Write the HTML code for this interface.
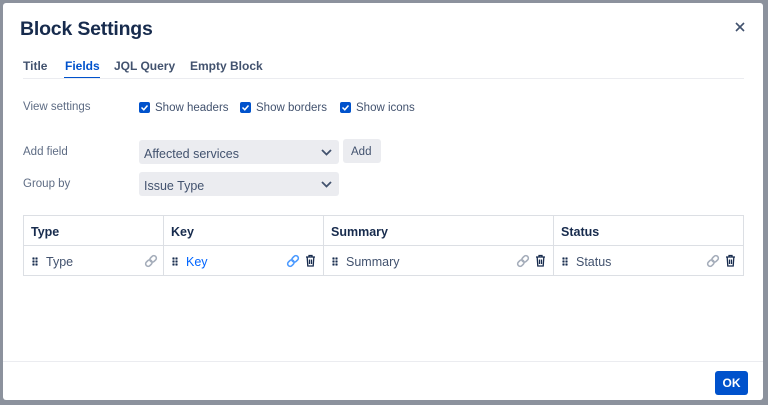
<!DOCTYPE html>
<html><head><style>
*{box-sizing:border-box;margin:0;padding:0}
body{width:768px;height:405px;background:#8c929d;font-family:"Liberation Sans",sans-serif;position:relative;overflow:hidden;color:#172b4d}
.m{position:absolute;left:3px;top:3px;width:760px;height:397px;background:#fff;border-radius:3px}
.a{position:absolute;white-space:nowrap}
.t{font-size:19.5px;color:#172b4d;left:17px;top:15px;font-weight:bold;letter-spacing:-0.2px;-webkit-text-stroke:0}
.tab{font-size:12px;font-weight:bold;color:#42526e;top:56px}
.lbl{font-size:11.5px;color:#5e6c84}
.cb{position:absolute;width:11px;height:11px;background:#0052cc;border-radius:2px}
.cb svg{position:absolute;left:1px;top:1px}
.cbl{font-size:11.5px;color:#42526e}
.sel{position:absolute;background:#ebecf0;border-radius:3px;font-size:12.5px;color:#42526e;padding:7px 0 0 5px}
.chev{position:absolute;right:7px;top:9px}
.tbl{position:absolute;left:20px;top:212px;width:721px;height:61px;border:1px solid #dcdfe4}
.hd{position:absolute;top:0;height:30px;font-size:12.5px;font-weight:bold;color:#172b4d;padding:9px 0 0 7px;border-right:1px solid #dcdfe4;border-bottom:1px solid #dcdfe4}
.cl{position:absolute;top:30px;height:29px;font-size:12.5px;color:#42526e;padding:9px 0 0 22px;border-right:1px solid #dcdfe4}
.grip{position:absolute;left:8px;top:11px;width:6px;height:9px;background:radial-gradient(circle,#172b4d 1.1px,transparent 1.3px) 0 0/3px 3px}
.ic{position:absolute;top:8px}
</style></head><body>
<div class="m">
<div class="a t" style="font-weight:600">Block Settings</div>
<svg class="a" style="left:732px;top:19px" width="10" height="10"><path d="M1 1L9 9M9 1L1 9" stroke="#42526e" stroke-width="1.6"/></svg>
<div class="a tab" style="left:20px">Title</div>
<div class="a tab" style="left:62px;color:#0052cc">Fields</div>
<div class="a" style="left:61px;top:74px;width:36px;height:2px;background:#0052cc"></div>
<div class="a tab" style="left:111px">JQL Query</div>
<div class="a tab" style="left:187px">Empty Block</div>
<div class="a" style="left:20px;top:75px;width:721px;height:1px;background:#ebecf0"></div>

<div class="a lbl" style="left:20px;top:98px">View settings</div>
<div class="cb" style="left:136px;top:99px"><svg width="9" height="9"><path d="M1.5 4.5L3.8 6.8L7.5 2.5" stroke="#fff" stroke-width="1.5" fill="none"/></svg></div>
<div class="a cbl" style="left:152px;top:99px">Show headers</div>
<div class="cb" style="left:237px;top:99px"><svg width="9" height="9"><path d="M1.5 4.5L3.8 6.8L7.5 2.5" stroke="#fff" stroke-width="1.5" fill="none"/></svg></div>
<div class="a cbl" style="left:253px;top:99px">Show borders</div>
<div class="cb" style="left:337px;top:99px"><svg width="9" height="9"><path d="M1.5 4.5L3.8 6.8L7.5 2.5" stroke="#fff" stroke-width="1.5" fill="none"/></svg></div>
<div class="a cbl" style="left:353px;top:99px">Show icons</div>

<div class="a lbl" style="left:20px;top:143px">Add field</div>
<div class="sel" style="left:136px;top:137px;width:200px;height:24px">Affected services<svg class="chev" width="11" height="7"><path d="M1 1L5.5 5.5L10 1" stroke="#42526e" stroke-width="1.8" fill="none"/></svg></div>
<div class="sel" style="left:340px;top:136px;width:38px;height:24px;font-size:11.5px;padding-left:8px">Add</div>
<div class="a lbl" style="left:20px;top:175px">Group by</div>
<div class="sel" style="left:136px;top:169px;width:200px;height:24px">Issue Type<svg class="chev" width="11" height="7"><path d="M1 1L5.5 5.5L10 1" stroke="#42526e" stroke-width="1.8" fill="none"/></svg></div>

<div class="tbl">
<div class="hd" style="left:0;width:140px">Type</div>
<div class="hd" style="left:140px;width:160px">Key</div>
<div class="hd" style="left:300px;width:230px">Summary</div>
<div class="hd" style="left:530px;width:190px;border-right:none">Status</div>
<div class="cl" style="left:0;width:140px"><span class="grip"></span>Type
<svg class="ic" style="left:120px" width="14" height="14"><g transform="rotate(-45 7 7)" fill="none" stroke="#a5adba" stroke-width="1.6"><rect x="0.5" y="4.5" width="7" height="5" rx="2.5"/><rect x="6.5" y="4.5" width="7" height="5" rx="2.5"/></g></svg></div>
<div class="cl" style="left:140px;width:160px;color:#0065ff"><span class="grip"></span>Key
<svg class="ic" style="left:122px" width="14" height="14"><g transform="rotate(-45 7 7)" fill="none" stroke="#4c9aff" stroke-width="1.6"><rect x="0.5" y="4.5" width="7" height="5" rx="2.5"/><rect x="6.5" y="4.5" width="7" height="5" rx="2.5"/></g></svg>
<svg class="ic" style="left:141px" width="11" height="13"><path d="M1 3H10M4 3V1.5H7V3M2.2 3.5L2.8 12H8.2L8.8 3.5M4.5 5.5V10M6.5 5.5V10" stroke="#172b4d" stroke-width="1.3" fill="none"/></svg></div>
<div class="cl" style="left:300px;width:230px"><span class="grip"></span>Summary
<svg class="ic" style="left:192px" width="14" height="14"><g transform="rotate(-45 7 7)" fill="none" stroke="#a5adba" stroke-width="1.6"><rect x="0.5" y="4.5" width="7" height="5" rx="2.5"/><rect x="6.5" y="4.5" width="7" height="5" rx="2.5"/></g></svg>
<svg class="ic" style="left:211px" width="11" height="13"><path d="M1 3H10M4 3V1.5H7V3M2.2 3.5L2.8 12H8.2L8.8 3.5M4.5 5.5V10M6.5 5.5V10" stroke="#172b4d" stroke-width="1.3" fill="none"/></svg></div>
<div class="cl" style="left:530px;width:190px;border-right:none"><span class="grip"></span>Status
<svg class="ic" style="left:152px" width="14" height="14"><g transform="rotate(-45 7 7)" fill="none" stroke="#a5adba" stroke-width="1.6"><rect x="0.5" y="4.5" width="7" height="5" rx="2.5"/><rect x="6.5" y="4.5" width="7" height="5" rx="2.5"/></g></svg>
<svg class="ic" style="left:171px" width="11" height="13"><path d="M1 3H10M4 3V1.5H7V3M2.2 3.5L2.8 12H8.2L8.8 3.5M4.5 5.5V10M6.5 5.5V10" stroke="#172b4d" stroke-width="1.3" fill="none"/></svg></div>
</div>

<div class="a" style="left:0;top:358px;width:760px;height:1px;background:#ebecf0"></div>
<div class="a" style="left:712px;top:368px;width:33px;height:24px;background:#0052cc;border-radius:3px;color:#fff;font-size:12px;font-weight:bold;text-align:center;line-height:24px">OK</div>
</div>
</body></html>
